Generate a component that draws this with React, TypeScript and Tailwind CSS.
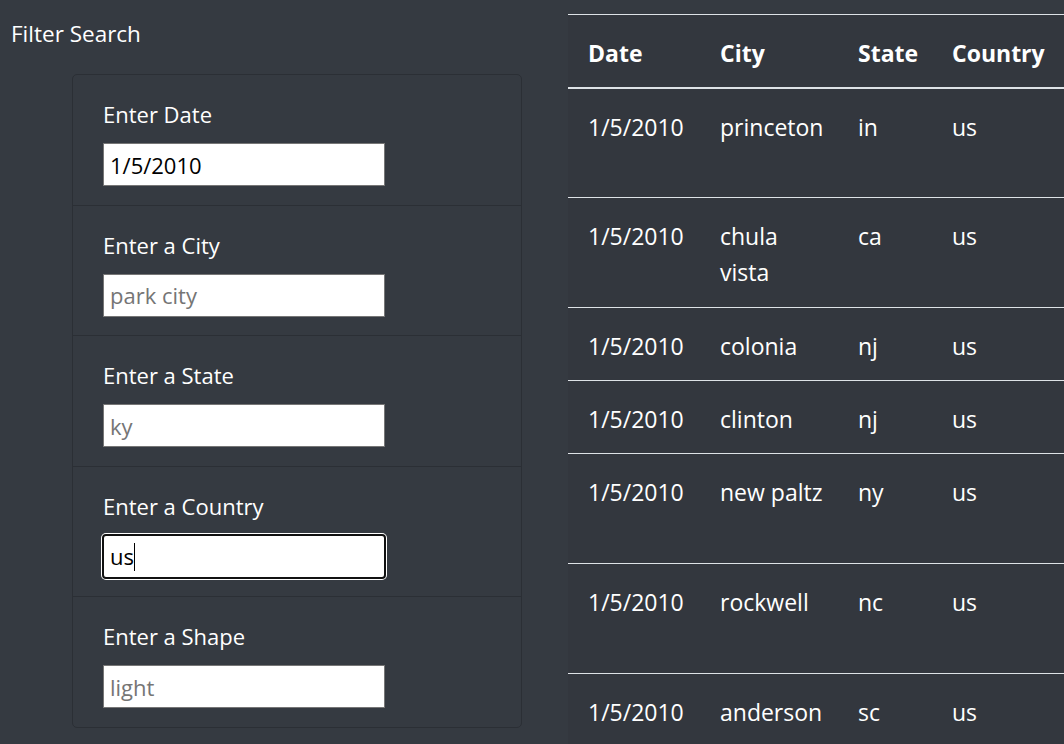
import React from 'react'

type Sighting = {
  date: string
  city: string
  state: string
  country: string
  shape: string
  duration: string
  comments: string
  tall: boolean
}

const sightings: Sighting[] = [
  { date: '1/5/2010', city: 'princeton', state: 'in', country: 'us', shape: 'light', duration: '2 min', comments: 'Bright light moving slowly over the field', tall: true },
  { date: '1/5/2010', city: 'chula vista', state: 'ca', country: 'us', shape: 'circle', duration: '10 sec', comments: 'Orange circle', tall: true },
  { date: '1/5/2010', city: 'colonia', state: 'nj', country: 'us', shape: 'disk', duration: '1 min', comments: 'Disk', tall: false },
  { date: '1/5/2010', city: 'clinton', state: 'nj', country: 'us', shape: 'light', duration: '5 min', comments: 'Light', tall: false },
  { date: '1/5/2010', city: 'new paltz', state: 'ny', country: 'us', shape: 'fireball', duration: '3 min', comments: 'Fireball heading north over the ridge', tall: true },
  { date: '1/5/2010', city: 'rockwell', state: 'nc', country: 'us', shape: 'triangle', duration: '15 min', comments: 'Three lights in a triangle, hovering', tall: true },
  { date: '1/5/2010', city: 'anderson', state: 'sc', country: 'us', shape: 'other', duration: '30 sec', comments: 'Strange object seen from the highway', tall: true },
]

const filters = [
  { label: 'Enter Date', value: '1/5/2010', placeholder: '' },
  { label: 'Enter a City', value: '', placeholder: 'park city' },
  { label: 'Enter a State', value: '', placeholder: 'ky' },
  { label: 'Enter a Country', value: 'us', placeholder: '', focused: true },
  { label: 'Enter a Shape', value: '', placeholder: 'light' },
]

const font = { fontFamily: '"Open Sans", "Noto Sans", sans-serif' }

function FilterItem({
  label,
  value,
  placeholder,
  focused,
  last,
}: {
  label: string
  value: string
  placeholder: string
  focused?: boolean
  last: boolean
}) {
  return (
    <li className={`pl-[30px] pt-[24px] pb-[18.5px] ${last ? '' : 'border-b border-[#2b2f35]'}`}>
      <label className="block text-[22px] leading-[30px] text-white mb-[14px]">{label}</label>
      {focused ? (
        <div className="relative w-[284px] h-[45px] -ml-px -mt-px -mb-px">
          <input
            readOnly
            value={value}
            className="w-full h-full bg-white text-black text-[22px] pl-[6px] border-2 border-[#111] rounded-[4px] ring-1 ring-white outline-none"
            style={font}
          />
          {/* caret */}
          <span className="absolute left-[32px] top-[9px] w-px h-[28px] bg-black" />
        </div>
      ) : (
        <input
          readOnly
          value={value}
          placeholder={placeholder}
          className="block w-[282px] h-[43px] bg-white text-black text-[22px] pl-[6px] border border-[#767676] outline-none placeholder:text-[#757575]"
          style={font}
        />
      )}
    </li>
  )
}

export default function App() {
  return (
    <div className="min-h-screen w-full bg-[#353a41] text-white flex overflow-hidden" style={font}>
      {/* Filters */}
      <div className="w-[568px] shrink-0">
        <h2 className="pl-[11px] pt-[19px] text-[22.5px] leading-[30px]">Filter Search</h2>
        <ul className="ml-[72px] mt-[25px] w-[450px] border border-[#2b2f35] rounded-[5px]">
          {filters.map((f, i) => (
            <FilterItem
              key={f.label}
              label={f.label}
              value={f.value}
              placeholder={f.placeholder}
              focused={f.focused}
              last={i === filters.length - 1}
            />
          ))}
        </ul>
      </div>

      {/* Results table */}
      <div className="flex-1 overflow-hidden pt-[14px] h-[744px]">
        <table className="table-fixed w-[1200px] border-collapse bg-[#33373e] text-[23px] leading-[36px] text-left">
          <colgroup>
            <col className="w-[132px]" />
            <col className="w-[138px]" />
            <col className="w-[94px]" />
            <col className="w-[132px]" />
            <col className="w-[130px]" />
            <col className="w-[130px]" />
            <col className="w-[444px]" />
          </colgroup>
          <thead>
            <tr className="border-t border-[#dee2e6]">
              {['Date', 'City', 'State', 'Country', 'Shape', 'Duration', 'Comments'].map((h) => (
                <th
                  key={h}
                  className="h-[73px] align-bottom pl-[20px] pr-[11px] pb-[16px] font-bold border-b-2 border-[#dee2e6]"
                >
                  {h}
                </th>
              ))}
            </tr>
          </thead>
          <tbody>
            {sightings.map((s, i) => (
              <tr key={i} className="border-t border-[#dee2e6]">
                {[s.date, s.city, s.state, s.country, s.shape, s.duration, s.comments].map((v, j) => (
                  <td
                    key={j}
                    className={`align-top pl-[20px] pr-[11px] pt-[20px] ${s.tall ? 'h-[110px]' : 'h-[73px]'}`}
                  >
                    {v}
                  </td>
                ))}
              </tr>
            ))}
          </tbody>
        </table>
      </div>
    </div>
  )
}
